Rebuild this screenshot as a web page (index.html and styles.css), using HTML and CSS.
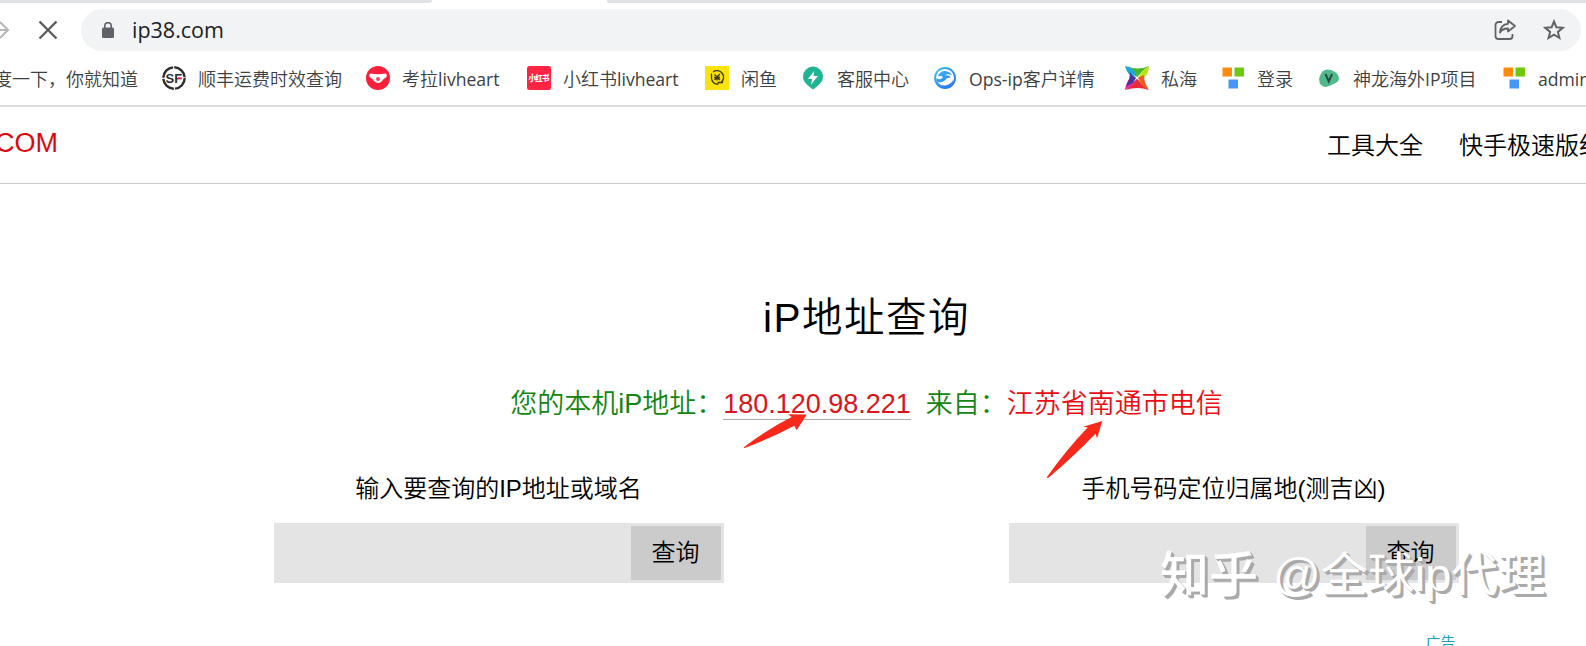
FILE: index.html
```
<!DOCTYPE html>
<html lang="zh-CN">
<head>
    <meta charset="UTF-8">
    <meta name="viewport" content="width=device-width, initial-scale=1.0">
    <title>iP地址查询</title>
    <link rel="stylesheet" href="styles.css">
</head>
<body>
    <div class="tabs">
        <div class="tab-left"></div>
        <div class="tab-right"></div>
    </div>
    <div class="toolbar">
        <svg class="forward" width="10" height="24" viewBox="0 0 10 24" fill="none" stroke="#b4b6b9" stroke-width="2"><path d="M0 12H8M0 4L8 12L0 20"/></svg>
        <svg class="stop" width="20" height="20" viewBox="0 0 20 20" fill="none" stroke="#5a5d61" stroke-width="2.4"><path d="M1.5 1.5L18.5 18.5M18.5 1.5L1.5 18.5"/></svg>
        <div class="address">
            <svg class="lock" width="12" height="16" viewBox="0 0 12 16"><rect x="0" y="5.5" width="12" height="10.5" rx="1.5" fill="#5f6368"/><path d="M2.8 6V3.8a3.2 3.2 0 0 1 6.4 0V6" fill="none" stroke="#5f6368" stroke-width="1.6"/></svg>
            <span class="url">ip38.com</span>
            <svg class="share" width="24" height="22" viewBox="0 0 24 22" fill="none" stroke="#5f6368" stroke-width="1.8" stroke-linejoin="round"><path d="M9 3H5.500a3 3 0 0 0-3 3v11a3 3 0 0 0 3 3h11a3 3 0 0 0 3-3v-2"/><path d="M15 1.500L22 7L15 12.500V9.500C11.500 9.500 8.500 10.500 7 13.500C7.300 8.500 10.500 5.200 15 4.800Z"/></svg>
            <svg class="star" width="22" height="22" viewBox="0 0 22 22" fill="none" stroke="#5f6368" stroke-width="2"><path d="M11 2.500L13.400 8.300L19.700 8.800L14.900 12.900L16.400 19L11 15.700L5.600 19L7.100 12.900L2.300 8.800L8.600 8.300Z"/></svg>
        </div>
    </div>
    <div class="bookmarks">
        <div class="item first"><span>度一下，你就知道</span></div>
        <div class="item w180">
            <svg width="24" height="24" viewBox="0 0 24 24"><circle cx="12" cy="12" r="10.700" fill="#fff" stroke="#2b2b30" stroke-width="2.400" stroke-dasharray="15.600 1.200"/><text x="3.400" y="16.900" class="sf">S</text><text x="12.200" y="16.900" class="sf">F</text><path d="M16 12.200h3.500" stroke="#e0355a" stroke-width="2"/></svg>
            <span>顺丰运费时效查询</span>
        </div>
        <div class="item w136">
            <svg width="24" height="24" viewBox="0 0 24 24"><circle cx="12" cy="12" r="12" fill="#fb1f3c"/><path d="M4 7.500Q12 9 20 7.500Q22.500 10.500 17.500 13Q15 17 12 17Q9 17 6.500 13Q1.500 10.500 4 7.500Z" fill="#fff"/><circle cx="12" cy="13" r="1.900" fill="#fb3c50"/></svg>
            <span>考拉<em>livheart</em></span>
        </div>
        <div class="item w154">
            <svg width="24" height="24" viewBox="0 0 24 24"><rect width="24" height="24" rx="2.500" fill="#ff2442"/><text x="1.500" y="15" class="xhs" textLength="21">小红书</text></svg>
            <span>小红书<em>livheart</em></span>
        </div>
        <div class="item w72">
            <svg width="24" height="24" viewBox="0 0 24 24"><rect width="24" height="24" fill="#fbe30d"/><path d="M6.500 7.500v4.500a6 6 0 0 0 7 6M8 6a6.300 6.300 0 0 1 8 10.500M12.500 16.500h5.500M9.500 8.500l1.500 1.500M15 8l-2.500 2.500M9 11.500h6M12 9.500v5M9.500 14L12 11.500l3 2.500" fill="none" stroke="#3b350c" stroke-width="1.300"/></svg>
            <span>闲鱼</span>
        </div>
        <div class="item w108">
            <svg width="24" height="24" viewBox="0 0 24 24"><path d="M12 .5A10.200 10.200 0 0 1 22 10.500C22 16 17.500 19.500 12 23.500C6.500 19.500 2 16 2 10.500A10.200 10.200 0 0 1 12 .5Z" fill="#20b592"/><path d="M13.200 5L6.800 13H11.200L10 18.500L17 10H12.500Z" fill="#fff"/></svg>
            <span>客服中心</span>
        </div>
        <div class="item w168">
            <svg width="24" height="24" viewBox="0 0 24 24"><defs><linearGradient id="ops" x2="1" y2="1"><stop offset="0" stop-color="#3fc2f4"/><stop offset="1" stop-color="#2466f0"/></linearGradient></defs><circle cx="12" cy="12" r="10" fill="#fff" stroke="url(#ops)" stroke-width="1.800"/><path d="M5 10.500C6.500 3.500 16 3 19 9.500Q15 6.500 11.500 9.500Q16 8.500 18 11.500Q13.500 11 12.500 14Q9 17 4.500 16Q7.500 20 12.500 19.500Q18 18.500 20.500 13.500C20 20 13 23.500 8 20.500C3.500 18 2.500 14 3.500 12Q7 15 10 11Q8 9.500 5 10.500Z" fill="url(#ops)"/></svg>
            <span><em>Ops-ip</em>客户详情</span>
        </div>
        <div class="item w72">
            <svg width="24" height="24" viewBox="0 0 24 24"><path d="M0 0Q11 1 12 12Q3 12 0 0Z" fill="#1ba8d9"/><path d="M3 0Q12 5 24 0Q17 4 12 12Q11 4 3 0Z" fill="#48b629"/><path d="M24 0Q24 7 19 12L12 12Q16 5 24 0Z" fill="#bddf20"/><path d="M19 9Q19 17 24 24Q14 21 12 12Z" fill="#ef5a22"/><path d="M24 24Q12 20 1 24Q10 17 12 12Q15 20 24 24Z" fill="#ea2a3a"/><path d="M0 24Q1 16 5 12L12 12Q8 21 0 24Z" fill="#e42a9b"/><path d="M5 6Q5 14 1 20Q10 17 12 12Q7 11 5 6Z" fill="#47369c"/><path d="M8 8L12 11.200L16 8L12.800 12L16 16L12 12.800L8 16L11.200 12Z" fill="#fff"/></svg>
            <span>私海</span>
        </div>
        <div class="item w72">
            <svg width="24" height="24" viewBox="0 0 24 24"><rect x="1.500" y="1.500" width="9.500" height="9" fill="#ff8a0c"/><rect x="13.500" y="1.500" width="9.500" height="9" fill="#70c80c"/><rect x="7.500" y="13.500" width="9.500" height="9" fill="#4497f5"/></svg>
            <span>登录</span>
        </div>
        <div class="item w161">
            <svg width="24" height="24" viewBox="0 0 24 24"><path d="M8 4Q12 2.500 18 6Q24 10 21 15.500Q16 19 9 21Q2.500 21 2 13Q3.500 6 8 4Z" fill="#51ba8c"/><path d="M8.500 8L11.800 15.500L15 8" fill="none" stroke="#234c43" stroke-width="2"/></svg>
            <span>神龙海外<em>IP</em>项目</span>
        </div>
        <div class="item last">
            <svg width="24" height="24" viewBox="0 0 24 24"><rect x="1.500" y="1.500" width="9.500" height="9" fill="#ff8a0c"/><rect x="13.500" y="1.500" width="9.500" height="9" fill="#70c80c"/><rect x="7.500" y="13.500" width="9.500" height="9" fill="#4497f5"/></svg>
            <span><em>admin</em></span>
        </div>
    </div>

    <div class="header">
        <div class="logo">COM</div>
        <div class="nav">
            <a>工具大全</a>
            <a>快手极速版红包</a>
        </div>
    </div>

    <div class="main">
        <h1>iP地址查询</h1>
        <p class="result">您的本机iP地址：<a class="ip">180.120.98.221</a><span class="from">来自：</span><span class="place">江苏省南通市电信</span></p>
        <div class="search">
            <form>
                <label>输入要查询的IP地址或域名</label>
                <div class="box">
                    <input type="text">
                    <button type="button">查询</button>
                </div>
            </form>
            <form>
                <label>手机号码定位归属地(测吉凶)</label>
                <div class="box">
                    <input type="text">
                    <button type="button">查询</button>
                </div>
                <div class="ad">广告</div>
            </form>
        </div>
    </div>

    <svg class="arrows" width="1586" height="646" viewBox="0 0 1586 646" fill="#f8281a">
        <path d="M806.700 414.500L788 414.200L791.700 417Q766 430 743.800 447.200Q744 448.500 746 447.500Q770 438.500 794.300 425.700L796.700 430.300Z"/>
        <path d="M1102.300 421L1083.300 426.700L1087.700 427.500Q1066 450 1046.800 477.300Q1047.500 478.500 1049 477.300Q1073 457 1095.700 433.500L1097 438.500Z"/>
    </svg>
    <div class="watermark"><b>知乎</b><span>@全球ip代理</span></div>
</body>
</html>
```
FILE: styles.css
```
*{
    box-sizing: border-box;
}
body{
    margin: 0;
    width: 1586px;
    height: 646px;
    overflow: hidden;
    position: relative;
    background-color: #fff;
    color: #000;
    font-family: "Liberation Sans", "Noto Sans CJK SC", sans-serif;
    font-weight: 350;
}

/* browser bars */
.tabs{
    display: flex;
    justify-content: space-between;
    height: 3px;
}
.tab-left, .tab-right{
    background-color: #dee1e6;
}
.tab-left{
    width: 432px;
    border-bottom-right-radius: 4px;
}
.tab-right{
    width: 979px;
    border-bottom-left-radius: 4px;
}
.toolbar{
    display: flex;
    align-items: center;
    height: 54px;
}
.stop{
    margin-left: 28px;
}
.address{
    display: flex;
    align-items: center;
    width: 1500px;
    height: 42px;
    margin-left: 23px;
    padding: 0 16px 0 21px;
    border-radius: 21px;
    background-color: #f1f3f4;
}
.url{
    margin-left: 18px;
    font-family: "Open Sans", sans-serif;
    font-size: 21.5px;
    font-weight: 400;
    line-height: 30px;
    color: #202124;
}
.share{
    margin-left: auto;
}
.star{
    margin-left: 26px;
}
.bookmarks{
    display: flex;
    gap: 24px;
    height: 50px;
    padding-bottom: 6px;
    border-bottom: 2px solid #dadce0;
    font-family: "Noto Sans CJK SC", sans-serif;
    font-size: 18px;
    color: #3c4043;
    white-space: nowrap;
}
.item{
    display: flex;
    flex: none;
    align-items: center;
    gap: 12px;
}
.item em{
    font-family: "Open Sans", sans-serif;
    font-size: 17.6px;
    font-style: normal;
    font-weight: 400;
}
.first{
    width: 138px;
    justify-content: flex-end;
}
.w72{
    width: 72px;
}
.w108{
    width: 108px;
}
.w136{
    width: 137px;
}
.w154{
    width: 154px;
}
.w161{
    width: 161px;
}
.w168{
    width: 168px;
}
.w180{
    width: 180px;
}
.sf{
    font: bold 13px "Liberation Sans", sans-serif;
    fill: #2b2b30;
}
.xhs{
    font: 900 7.5px "Noto Sans CJK SC", sans-serif;
    fill: #fff;
}

/* site */
.header{
    display: flex;
    justify-content: space-between;
    height: 77px;
    border-bottom: 1px solid #ccc;
}
.logo{
    margin-left: -5px;
    font-size: 27px;
    line-height: 73px;
    color: #d9090f;
}
.nav{
    display: flex;
    gap: 36px;
    width: 259px;
    overflow: hidden;
    white-space: nowrap;
    font-size: 24px;
    line-height: 77px;
}
.nav a{
    flex: none;
}
.main{
    width: 1471px;
    margin-left: 131px;
    padding-top: 103px;
}
h1{
    margin: 0;
    font-size: 40.5px;
    font-weight: 350;
    letter-spacing: 1.5px;
    line-height: 62px;
    text-align: center;
}
.result{
    margin: 34px 0 0;
    font-size: 27px;
    line-height: 42px;
    text-align: center;
    color: #128512;
}
.ip{
    display: inline-block;
    height: 37px;
    border-bottom: 1px solid #aaa;
    color: #d9151b;
}
.from{
    margin-left: 15px;
}
.place{
    color: #e60f14;
}
.search{
    display: flex;
}
form{
    display: flex;
    flex-direction: column;
    align-items: center;
    width: 735px;
    padding-top: 46px;
}
label{
    font-size: 24px;
    line-height: 36px;
}
.box{
    display: flex;
    width: 450px;
    height: 60px;
    margin-top: 16px;
    padding: 3px;
    background-color: #e4e4e4;
}
input{
    flex: 1;
    min-width: 0;
    border: none;
    background: none;
}
button{
    width: 90px;
    padding: 0 0 5px;
    border: none;
    background-color: #cbcbcb;
    color: #000;
    font-family: inherit;
    font-size: 24px;
    font-weight: 350;
}
.ad{
    width: 450px;
    margin-top: 49px;
    padding-right: 3px;
    font-size: 15px;
    font-weight: 400;
    line-height: 22px;
    text-align: right;
    color: #229fb5;
}

/* marks over the page */
.arrows{
    position: absolute;
    top: 0;
    left: 0;
}
.watermark{
    position: absolute;
    left: 1160px;
    top: 539px;
    display: flex;
    gap: 15px;
    white-space: nowrap;
    font-size: 47px;
    font-weight: 400;
    line-height: 72px;
    color: #fff;
    text-shadow: 1px 1px #aaa, 2px 2px #aaa, 3px 3px #aaa;
}
.watermark b{
    font-size: 49px;
    font-weight: 500;
}
```
